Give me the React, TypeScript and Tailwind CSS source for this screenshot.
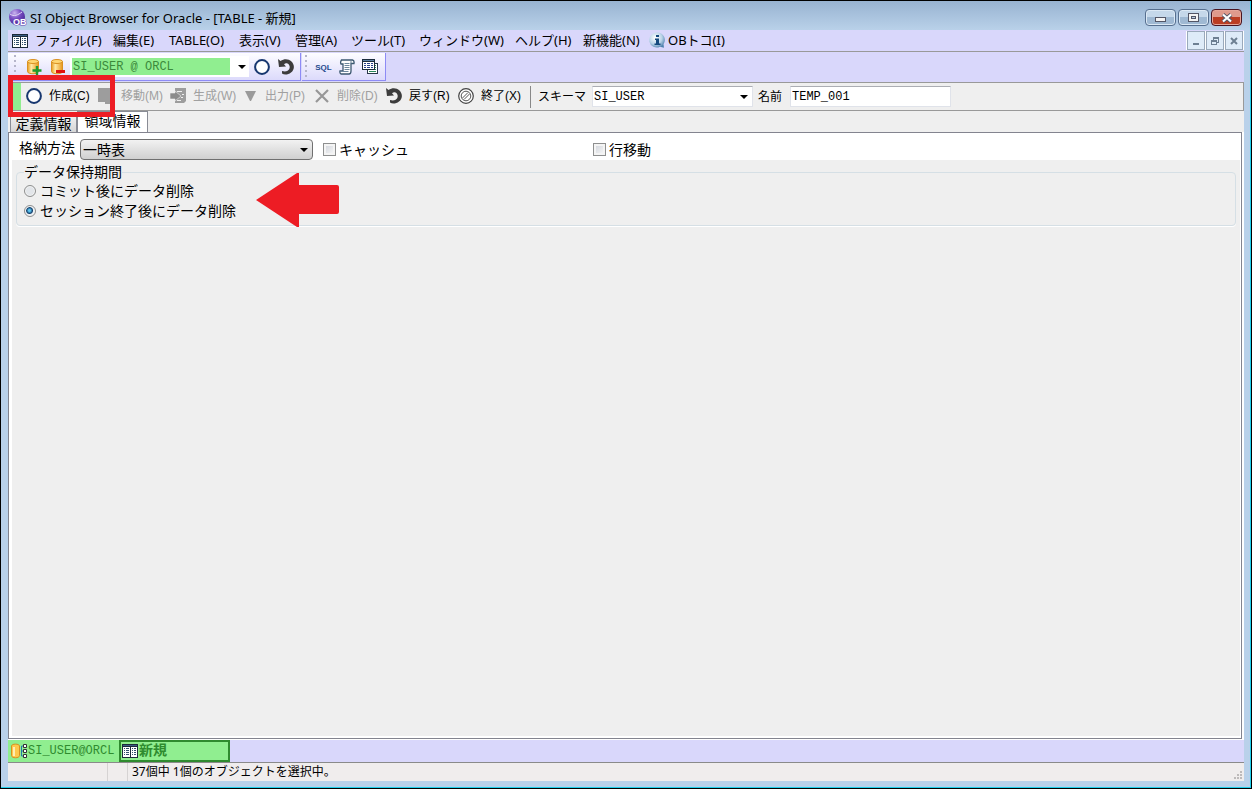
import type { ReactNode } from 'react'

const MENU_ITEMS = [
  { label: 'ファイル(F)', width: 'w-[78px]' },
  { label: '編集(E)', width: 'w-[56px]' },
  { label: 'TABLE(O)', width: 'w-[70px]' },
  { label: '表示(V)', width: 'w-[56px]' },
  { label: '管理(A)', width: 'w-[56px]' },
  { label: 'ツール(T)', width: 'w-[68px]' },
  { label: 'ウィンドウ(W)', width: 'w-[96px]' },
  { label: 'ヘルプ(H)', width: 'w-[68px]' },
  { label: '新機能(N)', width: 'w-[66px]' },
]

const UI_FONT = "font-['Noto_Sans','Noto_Sans_CJK_JP',sans-serif]"
const GOTHIC_FONT = "font-['Liberation_Sans','Noto_Sans_CJK_JP',sans-serif]"
const MONO_FONT = "font-['Liberation_Mono','Noto_Sans_CJK_JP',monospace]"

function AppLogo() {
  return (
    <svg width="18" height="18" viewBox="0 0 18 18" aria-hidden="true">
      <defs>
        <radialGradient id="orb" cx="0.35" cy="0.25" r="0.8">
          <stop offset="0" stopColor="#c9b4ee" />
          <stop offset="0.45" stopColor="#7a4fc4" />
          <stop offset="1" stopColor="#452390" />
        </radialGradient>
      </defs>
      <circle cx="8" cy="8" r="8" fill="url(#orb)" />
      <path d="M1 5c4 3 8 1 12-2" stroke="#e4d9f7" strokeWidth="1" fill="none" />
      <text
        x="4"
        y="16"
        fontSize="9"
        fontWeight="bold"
        fontFamily="Liberation Sans, sans-serif"
        fill="#fff"
        stroke="#6a45b4"
        strokeWidth="1"
        paintOrder="stroke"
      >
        OB
      </text>
    </svg>
  )
}

function TableIcon() {
  return (
    <svg width="16" height="16" viewBox="0 0 16 16" shapeRendering="crispEdges" aria-hidden="true">
      <rect x="0" y="1" width="16" height="14" fill="#1e2b3a" />
      <rect x="1" y="2" width="14" height="1" fill="#3b5d84" />
      <rect x="1" y="4" width="7" height="10" fill="#fff" />
      <rect x="9" y="4" width="6" height="10" fill="#fff" />
      <path
        d="M2 5h1v1h-1zM4 5h3v1h-3zM2 7h1v1h-1zM4 7h3v1h-3zM2 9h1v1h-1zM4 9h3v1h-3zM2 11h1v1h-1zM4 11h3v1h-3zM10 5h1v1h-1zM12 5h2v1h-2zM10 7h1v1h-1zM12 7h2v1h-2zM10 9h1v1h-1zM12 9h2v1h-2zM10 11h1v1h-1zM12 11h2v1h-2z"
        fill="#33506e"
      />
    </svg>
  )
}

function DatabaseIcon({ children }: { children?: ReactNode }) {
  return (
    <svg width="16" height="18" viewBox="0 0 16 18" aria-hidden="true">
      <defs>
        <linearGradient id="gold">
          <stop offset="0" stopColor="#e89a1c" />
          <stop offset="0.35" stopColor="#ffe9a3" />
          <stop offset="1" stopColor="#e8961a" />
        </linearGradient>
      </defs>
      <path d="M1.5 3.5v10c0 3 11 3 11 0v-10" fill="url(#gold)" stroke="#d99122" />
      <ellipse cx="7" cy="3.5" rx="5.5" ry="2" fill="#ffd773" stroke="#d99122" />
      {children}
    </svg>
  )
}

function CircleIcon() {
  return (
    <svg width="16" height="16" viewBox="0 0 16 16" aria-hidden="true">
      <circle cx="8" cy="8" r="6.9" fill="#fff" stroke="#17376f" strokeWidth="2" />
    </svg>
  )
}

function UndoIcon() {
  return (
    <svg width="16" height="16" viewBox="0 0 16 16" aria-hidden="true">
      <path
        d="M0 0l2.500 2c4-2.500 8-2 11 .5c3.500 3.500 3 8.500-.5 11c-3 2.500-7 2.500-9 1v-2.500c3 1 5.500.5 7-1.500c1.500-2.500 .5-5-1.500-6c-1.500-.5-2.500 0-3.500 .7l2 2.300l-7 .5z"
        fill="#3c3c3c"
      />
    </svg>
  )
}

function SqlIcon() {
  return (
    <svg width="17" height="16" viewBox="0 0 17 16" aria-hidden="true">
      <text
        x="8.5"
        y="11"
        textAnchor="middle"
        fontSize="8"
        fontWeight="bold"
        fontFamily="Liberation Sans, sans-serif"
        fill="#1f4a8c"
      >
        SQL
      </text>
    </svg>
  )
}

function ScriptIcon() {
  return (
    <svg width="16" height="16" viewBox="0 0 16 16" aria-hidden="true">
      <path
        d="M2.500 1h11q2 .5 1.500 3.500h-3v7.500q0 3-2 3h-8q-1.500-1-1-3h3v-7h-2q-1-2 .5-4z"
        fill="#fff"
        stroke="#3c5870"
        strokeWidth="1.300"
      />
      <path d="M5.500 4.500h5M5.500 6.500h5M5.500 8.500h5M5.500 10.500h5M1.500 12.500h8M12 2v2.500" stroke="#6d879d" fill="none" />
    </svg>
  )
}

function TablesIcon() {
  return (
    <svg width="16" height="16" viewBox="0 0 16 16" shapeRendering="crispEdges" aria-hidden="true">
      <rect x="5" y="4" width="11" height="11" fill="#28384a" />
      <rect x="6" y="5" width="9" height="9" fill="#fff" />
      <path d="M7 12h7v1h-7zM13 6h1v1h-1zM13 8h1v1h-1zM13 10h1v1h-1z" fill="#28885a" />
      <rect x="0" y="0" width="13" height="11" fill="#1c2c3c" />
      <rect x="1" y="1" width="11" height="1" fill="#5f83a8" />
      <rect x="1" y="3" width="11" height="7" fill="#fff" />
      <path
        d="M2 4h2v1h-2zM5 4h3v1h-3zM9 4h2v1h-2zM2 6h2v1h-2zM5 6h3v1h-3zM9 6h2v1h-2zM2 8h2v1h-2zM5 8h3v1h-3zM9 8h2v1h-2z"
        fill="#26418a"
      />
    </svg>
  )
}

function MoveIcon() {
  return (
    <svg width="16" height="16" viewBox="0 0 16 16" fill="#9d9d9d" aria-hidden="true">
      <path d="M0 0h13v12h2v2h-3v2h-5v-2h-7z" />
    </svg>
  )
}

function GenerateIcon() {
  return (
    <svg width="16" height="16" viewBox="0 0 16 16" aria-hidden="true">
      <path d="M5 0h11v13l-2 2h-9z" fill="#9d9d9d" />
      <path d="M7 3.500h5M12 6.500h2M11 9.500h2M7 12.500h4" stroke="#efefef" />
      <path d="M0 5h5v-2l6 5l-6 5v-2h-5z" fill="#8b8b8b" stroke="#efefef" strokeWidth="0.600" />
    </svg>
  )
}

function OutputIcon() {
  return (
    <svg width="16" height="16" viewBox="0 0 16 16" aria-hidden="true">
      <path d="M3 3h11l-5 10h-1z" fill="#9a9a9a" />
    </svg>
  )
}

function DeleteIcon() {
  return (
    <svg width="16" height="16" viewBox="0 0 16 16" aria-hidden="true">
      <path d="M2 2l12 12M14 2l-12 12" stroke="#979797" strokeWidth="2.200" />
    </svg>
  )
}

function ExitIcon() {
  return (
    <svg width="16" height="16" viewBox="0 0 16 16" fill="none" aria-hidden="true">
      <circle cx="8" cy="8" r="7.3" fill="#fff" stroke="#444" strokeWidth="1.200" />
      <circle cx="8" cy="8" r="4.800" stroke="#555" />
      <path d="M4.500 10l5.500-5.500M6 11.500l5.500-5.500" stroke="#555" />
    </svg>
  )
}

function InfoIcon() {
  return (
    <svg width="17" height="16" viewBox="0 0 17 16" aria-hidden="true">
      <defs>
        <radialGradient id="info" cx="0.4" cy="0.35" r="0.7">
          <stop offset="0" stopColor="#fff" />
          <stop offset="0.6" stopColor="#b9d3e8" />
          <stop offset="1" stopColor="#4d80ad" />
        </radialGradient>
      </defs>
      <path d="M8 0.500a7.500 7.500 0 1 0 3 14.200l4 1l-.5-3.500a7.500 7.500 0 0 0-6.500-11.700z" fill="url(#info)" />
      <path d="M7 3h3v2h-3zM6 6.500h4v5h1.500v1.500h-6v-1.500h1.500v-3.500h-1z" fill="#14497e" />
    </svg>
  )
}

function DownArrow() {
  return (
    <svg width="8" height="4" viewBox="0 0 8 4" className="pointer-events-none" aria-hidden="true">
      <path d="M0 0h8l-4 4z" fill="#000" />
    </svg>
  )
}

function Grip() {
  return (
    <svg width="3" height="23" viewBox="0 0 3 23" shapeRendering="crispEdges" aria-hidden="true">
      <path d="M0 0h2v2h-2zM0 5h2v2h-2zM0 10h2v2h-2zM0 15h2v2h-2zM0 20h2v2h-2z" fill="#b5b5ca" />
    </svg>
  )
}

const TOOL_BUTTONS = [
  { label: '作成(C)', icon: <CircleIcon />, enabled: true },
  { label: '移動(M)', icon: <MoveIcon />, enabled: false },
  { label: '生成(W)', icon: <GenerateIcon />, enabled: false },
  { label: '出力(P)', icon: <OutputIcon />, enabled: false },
  { label: '削除(D)', icon: <DeleteIcon />, enabled: false },
  { label: '戻す(R)', icon: <UndoIcon />, enabled: true },
  { label: '終了(X)', icon: <ExitIcon />, enabled: true },
]

function TitleBar() {
  const button =
    'flex h-[17px] w-[31px] items-center justify-center rounded-sm border border-[#566f8f] bg-linear-to-b from-[#c5d8ea] from-50% to-[#9fb9d3] to-50% shadow-[inset_0_0_0_1px_#dce9f5]'
  return (
    <header className="flex h-[29px] items-center bg-linear-to-b from-[#98b3d1] to-[#b9d1e9] px-2 pt-1">
      <AppLogo />
      <h1 className="ml-[3px] flex-1 text-[13px] leading-4 text-black">
        SI Object Browser for Oracle - [TABLE - 新規]
      </h1>
      <div className="flex gap-0.5">
        <button type="button" aria-label="最小化" className={button}>
          <svg width="11" height="5" viewBox="0 0 11 5" className="mt-1" shapeRendering="crispEdges">
            <rect width="11" height="5" fill="#535666" />
            <rect x="1" y="1" width="9" height="3" fill="#f4f4f4" />
          </svg>
        </button>
        <button type="button" aria-label="最大化" className={button}>
          <svg width="11" height="9" viewBox="0 0 11 9" shapeRendering="crispEdges">
            <rect width="11" height="9" fill="#535666" />
            <rect x="1" y="1" width="9" height="7" fill="#f4f4f4" />
            <rect x="3" y="3" width="5" height="3" fill="#535666" />
            <rect x="4" y="4" width="3" height="1" fill="#b9cce0" />
          </svg>
        </button>
        <button
          type="button"
          aria-label="閉じる"
          className="flex h-[17px] w-[31px] items-center justify-center rounded-sm border border-[#4a1420] bg-linear-to-b from-[#df9a8c] from-50% to-[#bb3d22] to-50% shadow-[inset_0_0_0_1px_#e5a699]"
        >
          <svg width="12" height="10" viewBox="0 0 12 10">
            <path d="M2 1.500l8 7M10 1.500l-8 7" stroke="#535666" strokeWidth="4" />
            <path d="M2 1.500l8 7M10 1.500l-8 7" stroke="#fff" strokeWidth="2.200" />
          </svg>
        </button>
      </div>
    </header>
  )
}

function MenuBar() {
  const button = 'flex h-[19px] w-[18px] items-center justify-center border border-[#9aa9bb] bg-[#deebf8]'
  return (
    <nav className="flex h-[21px] items-center bg-[#d9d7fb] pl-1 text-[13px] leading-4">
      <TableIcon />
      <div className="flex flex-1 items-center pb-0.5 pl-[7px]">
        {MENU_ITEMS.map((item) => (
          <button key={item.label} type="button" className={`${item.width} text-left whitespace-nowrap`}>
            {item.label}
          </button>
        ))}
        <button type="button" className="flex items-center gap-0.5 whitespace-nowrap">
          <InfoIcon />
          OBトコ(I)
        </button>
      </div>
      <div className="flex gap-px bg-white px-px">
        <button type="button" aria-label="子ウィンドウを最小化" className={button}>
          <svg width="8" height="8" viewBox="0 0 8 8" shapeRendering="crispEdges">
            <path d="M1 6h6v2h-6z" fill="#6d7f92" />
          </svg>
        </button>
        <button type="button" aria-label="子ウィンドウを元に戻す" className={button}>
          <svg width="8" height="8" viewBox="0 0 8 8" shapeRendering="crispEdges">
            <path d="M2 0h6v6h-2v-1h1v-3h-4v1h-1zM0 3h6v5h-6zM1 5v2h4v-2z" fill="#6d7f92" fillRule="evenodd" />
          </svg>
        </button>
        <button type="button" aria-label="子ウィンドウを閉じる" className={button}>
          <svg width="8" height="8" viewBox="0 0 8 8">
            <path d="M1 1l6 6M7 1l-6 6" stroke="#6d7f92" strokeWidth="2" />
          </svg>
        </button>
      </div>
    </nav>
  )
}

function ConnectionBar() {
  const band =
    'flex h-[28px] items-center border-r border-b border-[#8d8bf5] bg-linear-to-b from-[#fdfdff] to-[#dcdafb]'
  return (
    <div className="flex h-[32px] items-start gap-px border-t border-b border-[#999] bg-[#d9d7fb] pt-px">
      <div className={`${band} w-[293px] pl-[6px]`}>
        <Grip />
        <div className="ml-[9px] flex gap-2">
          <button type="button" aria-label="接続">
            <DatabaseIcon>
              <path d="M11 8v9M6.500 12.500h9" stroke="#1f9a2d" strokeWidth="2.400" />
            </DatabaseIcon>
          </button>
          <button type="button" aria-label="切断">
            <DatabaseIcon>
              <path d="M6 13.500h9" stroke="#e0100e" strokeWidth="3" />
            </DatabaseIcon>
          </button>
        </div>
        <div className="ml-1 flex h-[21px] w-[179px] items-center gap-2 bg-white pl-0.5">
          <select
            aria-label="接続先"
            className={`${MONO_FONT} h-[17px] w-[158px] appearance-none bg-[#90ee90] pl-px text-[12px] leading-4 text-[#3b8a3b]`}
          >
            <option>SI_USER @ ORCL</option>
          </select>
          <DownArrow />
        </div>
        <div className="ml-[5px] flex gap-2">
          <button type="button" aria-label="新規作成">
            <CircleIcon />
          </button>
          <button type="button" aria-label="再読込">
            <UndoIcon />
          </button>
        </div>
      </div>
      <div className={`${band} w-[84px] pl-[3px]`}>
        <Grip />
        <div className="ml-[7px] flex items-center gap-[7px]">
          <button type="button" aria-label="SQL実行">
            <SqlIcon />
          </button>
          <button type="button" aria-label="スクリプト実行">
            <ScriptIcon />
          </button>
          <button type="button" aria-label="オブジェクトリスト">
            <TablesIcon />
          </button>
        </div>
      </div>
    </div>
  )
}

function ObjectBar() {
  return (
    <div
      className={`${GOTHIC_FONT} relative flex h-[28px] items-center border-r border-b border-[#999] bg-[#efefef] pl-1 text-[12px] leading-4`}
    >
      <div className="h-full w-[9px] bg-[#90ee90]" />
      <div className="ml-[5px] flex pb-0.5">
        {TOOL_BUTTONS.map((tool) => (
          <button
            key={tool.label}
            type="button"
            disabled={!tool.enabled}
            className="flex w-[72px] items-center gap-[7px] whitespace-nowrap text-black disabled:text-[#a0a0a0]"
          >
            {tool.icon}
            {tool.label}
          </button>
        ))}
      </div>
      <div className="h-[22px] w-px bg-[#888]" />
      <label htmlFor="schema" className="ml-[7px] w-[54px]">
        スキーマ
      </label>
      <div className="flex h-[21px] w-[161px] items-center border border-[#e0e3ea] border-t-[#abadb3] bg-white pr-1">
        <select id="schema" className={`${MONO_FONT} flex-1 appearance-none bg-transparent pl-px text-[12px] leading-4`}>
          <option>SI_USER</option>
        </select>
        <DownArrow />
      </div>
      <label htmlFor="object-name" className="ml-[5px] w-8">
        名前
      </label>
      <input
        id="object-name"
        type="text"
        defaultValue="TEMP_001"
        className={`${MONO_FONT} h-[21px] w-[161px] border border-[#e0e3ea] border-t-[#abadb3] bg-white pl-px text-[12px] leading-4`}
      />
      <div className="pointer-events-none absolute -top-2 left-0 z-10 h-[42px] w-[107px] border-[5px] border-[#ed1c24]" />
    </div>
  )
}

function CheckBox({ label }: { label: string }) {
  return (
    <label className="flex items-center gap-[3px]">
      <input
        type="checkbox"
        className="size-[13px] appearance-none border border-[#8e8f8f] bg-linear-to-br from-[#cdd1d8] to-[#fbfbfb] shadow-[inset_0_0_0_2px_#f4f4f4]"
      />
      {label}
    </label>
  )
}

function RadioButton({ label, defaultChecked }: { label: string; defaultChecked?: boolean }) {
  return (
    <label className="flex h-5 items-center gap-1">
      <input
        type="radio"
        name="retention"
        defaultChecked={defaultChecked}
        className="size-3 appearance-none rounded-full border border-[#8e8f8f] bg-[#e2e5e9] shadow-[inset_0_0_0_1px_#f4f4f4] checked:bg-[radial-gradient(circle_at_45%_45%,#5cc4f0_0_1px,#14416e_3px,#e9eef2_4px)]"
      />
      {label}
    </label>
  )
}

function StoragePanel() {
  return (
    <section className="flex flex-1 flex-col border border-[#83848f] bg-white pr-px pb-0.5 pl-[3px]">
      <div className="flex h-[27px] items-center pt-[6px] pl-[7px]">
        <label htmlFor="storage" className="w-[61px] pb-1">
          格納方法
        </label>
        <div className="flex h-[21px] w-[233px] items-center rounded-sm border border-[#707070] bg-linear-to-b from-[#f2f2f2] to-[#d0d0d0] pr-1">
          <select id="storage" className="flex-1 appearance-none pl-0.5">
            <option>一時表</option>
          </select>
          <DownArrow />
        </div>
        <div className="ml-[10px] w-[270px]">
          <CheckBox label="キャッシュ" />
        </div>
        <CheckBox label="行移動" />
      </div>
      <div className="flex-1 bg-[#efefef] px-1 pt-1">
        <fieldset className="rounded-sm border border-[#d5dfe5] px-[7px] pb-1 shadow-[0_1px_0_#fff]">
          <legend className="leading-[17px]">データ保持期間</legend>
          <RadioButton label="コミット後にデータ削除" />
          <div className="flex">
            <RadioButton label="セッション終了後にデータ削除" defaultChecked />
            <div className="relative">
              <svg
                width="83"
                height="54"
                viewBox="0 0 83 54"
                fill="#ed1c24"
                className="pointer-events-none absolute -top-7 left-5"
                aria-hidden="true"
              >
                <path d="M0 27L41 0h2v12h38q2 0 2 2v25q0 2-2 2h-38v13h-2z" />
              </svg>
            </div>
          </div>
        </fieldset>
      </div>
    </section>
  )
}

function WindowTabs() {
  return (
    <div className={`${MONO_FONT} flex h-[22px] bg-[#d9d7fb] text-[12px] text-[#2f8b2f]`}>
      <button type="button" className="flex w-[111px] items-center bg-[#90ee90] pl-0.5">
        <svg width="18" height="16" viewBox="0 0 18 16" aria-hidden="true">
          <path d="M1.500 3v9.500c0 3 8 3 8 0v-9.500c0-2.500-8-2.500-8 0z" fill="#ffc84d" stroke="#d98f20" />
          <path d="M4 4v9" stroke="#ffeeb5" strokeWidth="2" />
          <path d="M11.500 3v10M11.500 3h2M11.500 8h2M11.500 13h2" stroke="#2478a8" fill="none" />
          <path d="M13.500 1.500h3v3h-3zM13.500 6.500h3v3h-3zM13.500 11.500h3v3h-3z" fill="#fff" stroke="#333" />
        </svg>
        SI_USER@ORCL
      </button>
      <button
        type="button"
        className="flex w-[111px] items-center gap-px border-2 border-[#2f8b2f] bg-[#90ee90] pl-px text-[14px] leading-4 font-bold"
      >
        <TableIcon />
        新規
      </button>
    </div>
  )
}

function StatusBar() {
  return (
    <footer className="flex h-[19px] border-t border-[#8a8a8a] bg-[#f0eded] text-[12px] leading-[18px]">
      <div className="w-[100px] border-r border-[#d6d3d3]" />
      <div className="w-5 border-r border-[#d6d3d3]" />
      <p className="flex-1 pl-1">37個中 1個のオブジェクトを選択中。</p>
      <svg width="10" height="10" viewBox="0 0 10 10" className="self-end" shapeRendering="crispEdges" aria-hidden="true">
        <path d="M6 0h2v2h-2zM3 3h2v2h-2zM6 3h2v2h-2zM0 6h2v2h-2zM3 6h2v2h-2zM6 6h2v2h-2z" fill="#bdbaba" />
      </svg>
    </footer>
  )
}

export default function App() {
  return (
    <div className={`${UI_FONT} flex min-h-screen flex-col border border-black bg-[#b9d1ea] text-black`}>
      <div className="flex flex-1 flex-col border-r border-b border-[#1fd0ec]">
        <TitleBar />
        <main className="mr-[6px] mb-[6px] ml-[7px] flex flex-1 flex-col bg-[#efefef]">
          <MenuBar />
          <ConnectionBar />
          <ObjectBar />
          <div className={`${GOTHIC_FONT} flex flex-1 flex-col text-[14px] leading-4`}>
            <div role="tablist" className="flex h-[21px] items-end pl-0.5">
              <button
                type="button"
                role="tab"
                aria-selected="false"
                className="h-[18px] w-[67px] border border-b-0 border-[#898c95] bg-linear-to-b from-[#f2f2f2] to-[#d6d6d6]"
              >
                定義情報
              </button>
              <button
                type="button"
                role="tab"
                aria-selected="true"
                className="-mb-px h-[22px] w-[71px] border border-b-0 border-[#898c95] bg-white pb-1"
              >
                領域情報
              </button>
            </div>
            <div className="flex flex-1 flex-col bg-white pr-0.5 pb-px">
              <StoragePanel />
            </div>
          </div>
          <WindowTabs />
          <StatusBar />
        </main>
      </div>
    </div>
  )
}
